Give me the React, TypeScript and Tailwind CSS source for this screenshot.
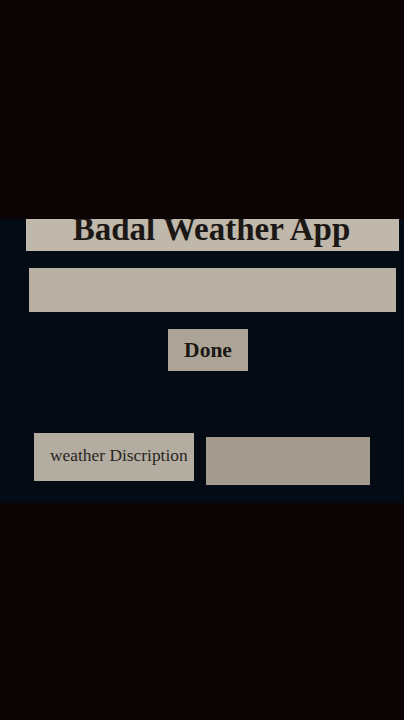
export default function App() {
  return (
    <div className="w-[404px] h-[720px] flex flex-col bg-[#0c0305] overflow-hidden" style={{ fontFamily: '"Liberation Serif", "Times New Roman", serif' }}>
      <div className="h-[219px] shrink-0 bg-[#0c0305]" />
      <div className="h-[284px] shrink-0 bg-[#050b14] flex flex-col">
        <div className="ml-[26px] w-[373px] h-[32px] bg-[#c0b8ab] overflow-hidden flex justify-center">
          <span className="block text-[33px] leading-[32px] font-bold text-[#1b1715] -mt-[6px] pr-[2px]">Badal Weather App</span>
        </div>
        <div className="ml-[29px] mt-[17px] w-[367px] h-[44px] bg-[#b7b0a3]" />
        <div className="ml-[168px] mt-[17px] w-[80px] h-[42px] bg-[#aca597] flex items-center justify-center">
          <span className="text-[21.5px] font-bold text-[#1b1715] leading-none pt-[2px]">Done</span>
        </div>
        <div className="mt-[62px] flex items-start">
          <div className="ml-[34px] w-[160px] h-[48px] bg-[#b2ada0] flex items-center pl-[16px]">
            <span className="text-[17.4px] text-[#2a2522] leading-none pb-[2px] whitespace-nowrap">weather Discription</span>
          </div>
          <div className="ml-[12px] mt-[4px] w-[164px] h-[48px] bg-[#a29b8e]" />
        </div>
      </div>
      <div className="flex-1 bg-[#0c0305]" />
    </div>
  );
}
